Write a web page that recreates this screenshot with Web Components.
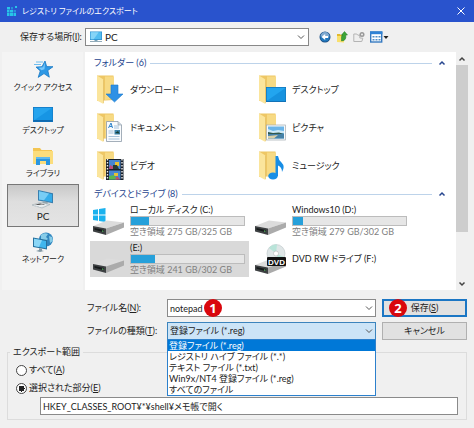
<!DOCTYPE html>
<html lang="ja">
<head>
<meta charset="utf-8">
<title>レジストリ ファイルのエクスポート</title>
<style>
  html, body { margin: 0; min-height: 100%; }
  body { background: #f0f0f0; color: #222; font: 9px/12px "Lato", "Noto Sans CJK JP", sans-serif; font-feature-settings: "palt"; }
</style>
</head>
<body>
<export-dialog></export-dialog>

<script>
const ICONS = {
  regedit: ['0 0 12 12', '<g fill="#27c5e8"><path d="M1 2h3v2.500H1zM1 5h2.500v2.500H1zM4 5h3v2.500H4zM1 8h2.500v3H1zM4 8h3v3H4zM7.500 8H10v3H7.500z"/><path d="M5 2h2v2.500H5zM7.500 5H10v2.500H7.500z" opacity=".55"/><path d="M9 1h2v2H9z"/></g>'],
  close: ['0 0 8 8', '<path d="M.5.5l7 7M7.5.5l-7 7" stroke="#fff" stroke-width="1" fill="none"/>'],
  chevron: ['0 0 8 8', '<path d="M1 2.5l3 3 3-3" stroke="#555" fill="none"/>'],
  up: ['0 0 8 8', '<path d="M1.5 5.5L4 3l2.500 2.500" stroke="currentColor" stroke-width="1.500" fill="none"/>'],
  down: ['0 0 8 8', '<path d="M1.500 2.500L4 5l2.500-2.500" stroke="currentColor" stroke-width="1.500" fill="none"/>'],
  monitor: ['0 0 14 12', '<rect x="1" y=".5" width="12" height="8.500" fill="#2d8fce"/><rect x="1.700" y="1.200" width="10.600" height="7" fill="#54bdf0"/><path d="M1.700 1.200h8l-5 7h-3z" fill="#86d4f7"/><path d="M5.500 9h3v1.200h-3z" fill="#7aa2b8"/><path d="M1 10.500h12" stroke="#93acba"/>'],
  back: ['0 0 12 12', '<circle cx="6" cy="6" r="5.500" fill="#1b4f86"/><circle cx="6" cy="6" r="4.700" fill="#2278bd"/><path d="M1.500 5.500a4.500 4.500 0 0 1 9 0z" fill="#7fa9cf"/><path d="M6.200 3v2h3v2h-3v2L2.500 6z" fill="#fff"/>'],
  upfolder: ['0 0 12 12', '<path d="M1 3h3l1 1h3v7H1z" fill="#e3b92c"/><path d="M1 5h7v6.500L1 11z" fill="#f9e06d"/><path d="M5.500 10V6q0-2 1.500-2H5.500L8.500.5 11.500 4H9.800v3Q9 10 5.500 10z" fill="#3ba536" stroke="#247a27" stroke-width=".5"/>'],
  newfolder: ['0 0 12 12', '<path d="M.8 10.500V3h3l1 1.200h2V7l3 .2-1 3.300z" fill="#eee" stroke="#b4b4b4"/><circle cx="9" cy="3.500" r="2.500" fill="#999"/><circle cx="9" cy="3.500" r="1" fill="#eee"/>'],
  views: ['0 0 20 12', '<rect x=".7" y="1" width="11" height="10" fill="#fff" stroke="#3579c0" stroke-width="1.400"/><path d="M0 .5h12.400v2.700H0z" fill="#2f82d5"/><path d="M2.500 5h2v1.500h-2zM5.500 5h2v1.500h-2zM8.500 5h2v1.500h-2zM2.500 8h2v1.500h-2zM5.500 8h2v1.500h-2zM8.500 8h2v1.500h-2z" fill="#528fc8"/><path d="M13.500 5h5L16 8z" fill="#222"/>'],
  star: ['0 0 22 20', '<path d="M13 1l1.700 5.600 6.300.1-5.200 3.800 1.500 6.700-5.300-3.600-5.800 3.800 2.100-6.500L4 7.100l6-.4z" fill="#2d98e5" stroke="#1879c4" stroke-width=".8"/><path d="M13 2.500l-2 4.800-4.500.5 3 2.500 3-1z" fill="#79c8fa"/><path d="M4 2h7M2 4.500h7" stroke="#6dbdf0" stroke-width="1.200"/>'],
  desktop: ['0 0 22 20', '<rect x="1" y="4" width="20" height="15" fill="#1378c4"/><rect x="1.800" y="4.800" width="18.400" height="12.700" fill="#25a4ee"/><path d="M1.800 17.500l18.400-12.700v12.700z" fill="#1795e4"/><path d="M1.500 17.800h19" stroke="#0d5a9b"/>'],
  library: ['0 0 22 20', '<path d="M1 2h7l1.500 2H20v14H1z" fill="#f3c552"/><path d="M1 5h20v13H1z" fill="#fbdd7c"/><path d="M4 11h14v8h-4v-4H8v4H4z" fill="#2b96df"/><path d="M4 11h14v2H4z" fill="#5db9ef"/>'],
  pc: ['0 0 24 20', '<path d="M7 1l15 3.300v10L7 11.500z" fill="#387faf"/><path d="M8 2.300l13 2.900v7.700L8 10.400z" fill="#35ace9"/><path d="M8 2.300l10 2.200-5 6.800-5-.9z" fill="#78cdf5"/><path d="M12 12l5 1-1 3-5-1z" fill="#94a6af"/><path d="M1 16l8-2.500 10 2-8 3.500z" fill="#dfe5e8" stroke="#9eabb2" stroke-width=".6"/><path d="M3 16l6-1.700 6 1.200M5 17l7-2M8 17.700l7-2" stroke="#fff" stroke-width=".5"/>'],
  network: ['0 0 22 20', '<circle cx="14" cy="7.500" r="7" fill="#3186bf"/><path d="M9 3q3-3 7-1l-2 3 2 2-3 2-4-2zM17 4l3 1 1 4-3 2z" fill="#87cce8"/><path d="M1 5.500L15 8v9.500L1 15z" fill="#28719e"/><path d="M2 6.700l12 2.200v7.400L2 14z" fill="#40b6ee"/><path d="M2 6.700l8 1.500-3 6.700L2 14z" fill="#8bd7f7"/><path d="M7 16.200l3 .6v1.700l2 .5-4 1-4-1 3-1z" fill="#8298a4"/>'],
  drive: ['0 0 31 28', '<path d="M0 19L14 13.500l17 2L13 21.500z" fill="#dcdcdc"/><path d="M0 19l13 2.500V28L0 24.500z" fill="#3e4143"/><path d="M13 21.500l18-6v5L13 28z" fill="#ababab"/><path d="M1.500 21l9.500 2v2.200L1.500 22.800z" fill="#161a1b"/><path d="M9 23.500l1.500.3v1l-1.500-.3z" fill="#6bd977"/>'],
};
const folder = '<path d="M4 .5h16.500V25L4 26z" fill="#eec765"/><path d="M12 1.500h9V24l-9 1z" fill="#f7da84"/><path d="M4 .5l6.500 4V29L4 25.500z" fill="#fbe59c"/><path d="M10.500 4.500V28" stroke="#dfba5d" stroke-width=".6"/>';
const F = (s) => ['0 0 31 30', folder + s];
Object.assign(ICONS, {
  'f-download': F('<path d="M18 10h7v9h5l-8.500 8L13 19h5z" fill="#2f91e5" stroke="#1879cc" stroke-width=".6"/>'),
  'f-desktop': F('<rect x="11" y="12" width="20" height="15" fill="#1272b7"/><rect x="11.700" y="12.700" width="18.600" height="13" fill="#22a5ef"/><path d="M12 25.700l18-12.500v12.500z" fill="#1692df"/>'),
  'f-document': F('<path d="M13.500 8.500H25l3.500 3.500v16.500h-15z" fill="#f9fbfd" stroke="#8d9ba8" stroke-width=".8"/><path d="M25 8.500V12h3.500" fill="#ced9e2" stroke="#8d9ba8" stroke-width=".6"/><path d="M15.500 15l2.500-5 1.500 5M16.500 13.500h2.500" stroke="#2d83cb" fill="none"/><path d="M21 13h5M21 15h5M15.500 18h5M15.500 20h5M15.500 23.500h11M15.500 26h11" stroke="#93b5d2" stroke-width=".8"/><rect x="21.500" y="17" width="5.500" height="4.500" fill="#3d83ab"/><path d="M22 20l3-2 1.500 2.500z" fill="#163c32"/>'),
  'f-pictures': F('<rect x="11.500" y="12" width="19" height="15" fill="#f8fafb" stroke="#a2aab0" stroke-width=".7"/><rect x="13" y="13.500" width="16" height="12" fill="#6bb5e9"/><path d="M13 16l5 2 5-1 6 1v2H13z" fill="#cde9f7"/><path d="M13 19l5 1 6-.5 5 1.500H13z" fill="#31594e"/><path d="M13 21h16v4.500H13z" fill="#4581a7"/><path d="M13 23l10-1-4 3.500h-6z" fill="#d9cfa8"/>'),
  'f-video': F('<rect x="13" y="8" width="17.500" height="21" fill="#18202b"/><rect x="16" y="9" width="11.500" height="9" fill="#4686d0"/><rect x="16" y="19.500" width="11.500" height="9" fill="#4686d0"/><path d="M14.500 8v21M29 8v21" stroke="#eee" stroke-width="1.400" stroke-dasharray="1.500 1.500"/><path d="M22 11h4v4h-4z" fill="#e8c233"/><path d="M17 14l4 2 2 2h-7z" fill="#ba4a79"/><path d="M20 14h4l2 4h-6z" fill="#263c33"/><path d="M21 22h4v3h-4z" fill="#e8c233"/><path d="M16 25l5-1 3 4.500h-8z" fill="#5ab653"/><path d="M24 25l3 3.500h-5z" fill="#c94c62"/>'),
  'f-music': F('<ellipse cx="18" cy="25" rx="4.800" ry="3.500" fill="#188ee5"/><path d="M20.500 5H23q.5 4 3.500 6.500 4 4 .5 9.500 0-5-4-6.500V25h-2.500z" fill="#188ee5"/>'),
  'd-windows': ['0 0 31 28', '<path d="M0 3l5-.8V7.500H0zM6 2l6.500-1v6.500H6zM0 8.500h5v5.200l-5-.8zM6 8.500h6.500V15L6 13.900z" fill="#1bb2ee"/>' + ICONS.drive[1]],
  'd-dvd': ['0 0 31 30', '<g transform="translate(0 2)">' + ICONS.drive[1] + '</g><circle cx="21" cy="9.500" r="9" fill="#dfe6e7" stroke="#b8c2c4" stroke-width=".6"/><path d="M21 9.500L14 4q3-4 8-3.500zM21 9.500l8 3.500q-2 4-5 5z" fill="#b9e4d9"/><circle cx="21" cy="9.500" r="2.500" fill="#fff" stroke="#aaa" stroke-width=".5"/><rect x="12" y="13" width="19" height="9" rx="1" fill="#111"/><text x="21.500" y="20.500" text-anchor="middle" font-family="Liberation Sans" font-weight="700" font-size="8" fill="#fff">DVD</text>'],
});

class UiIcon extends HTMLElement {
  connectedCallback() {
    const [box, art] = ICONS[this.getAttribute('name')];
    const [, , w, h] = box.split(' ');
    this.attachShadow({ mode: 'open' }).innerHTML =
      `<style>:host{display:block;flex:none;line-height:0}svg{display:block}</style>
       <svg width="${w}" height="${h}" viewBox="${box}" aria-hidden="true">${art}</svg>`;
  }
}
customElements.define('ui-icon', UiIcon);

function define(name, html) {
  const tpl = document.createElement('template');
  customElements.define(name, class extends HTMLElement {
    constructor() {
      super();
      const own = html.replace(/\{\{([\w-]+)\}\}/g, (m, a) => this.getAttribute(a) ?? '');
      tpl.innerHTML = '<style>*{box-sizing:border-box}button,input,select{font:inherit;color:inherit;font-feature-settings:inherit;border-radius:0;margin:0}</style>' + own;
      this.attachShadow({ mode: 'open' }).append(tpl.content.cloneNode(true));
    }
  });
}

define('title-bar', `
<style>
:host{display:flex;align-items:center;gap:4px;height:22px;padding:0 9px 0 6px;background:#2953cd;color:#fff;font-size:8px}
h1{flex:1;margin:0;font:inherit}
button{border:0;background:none;padding:0}
</style>
<ui-icon name="regedit"></ui-icon><h1><slot></slot></h1>
<button aria-label="閉じる"><ui-icon name="close"></ui-icon></button>`);

define('look-in', `
<style>
:host{display:flex;align-items:center;padding:6px 84px 6px 20px}
label{width:65px;flex:none}
.box{flex:1;display:flex;align-items:center;height:18px;border:1px solid #888;background:#fff;padding:0 3px}
select{flex:1;appearance:none;border:0;background:none;font-size:10px;height:16px;padding:0 2px}
.tools{display:flex;gap:5px;margin-left:10px}
.tools button{border:0;background:none;padding:0}
</style>
<label for="place">保存する場所(<u>I</u>):</label>
<div class="box"><ui-icon name="monitor"></ui-icon><select id="place"><option>PC</option></select><ui-icon name="chevron"></ui-icon></div>
<div class="tools">
<button aria-label="戻る"><ui-icon name="back"></ui-icon></button>
<button aria-label="上へ"><ui-icon name="upfolder"></ui-icon></button>
<button aria-label="新しいフォルダー"><ui-icon name="newfolder"></ui-icon></button>
<button aria-label="表示"><ui-icon name="views"></ui-icon></button>
</div>`);

define('place-item', `
<style>
:host{display:block}
button{width:100%;height:43px;border:1px solid transparent;background:none;padding:4px 0 0;display:flex;flex-direction:column;align-items:center;gap:1px;white-space:nowrap;font-size:8px}
:host([active]) button{border-color:#777;background:linear-gradient(#c8c8c8,#dedede 40%,#e4e4e4);font-size:10px}
</style>
<button><ui-icon name="{{icon}}"></ui-icon><span><slot></slot></span></button>`);

define('place-bar', `
<style>:host{display:block;padding:3px 4px 0 5px;background:#f4f4f4}</style>
<nav><slot></slot></nav>`);

define('item-group', `
<style>
:host{display:block;padding:0 5px 1px}
h2{display:flex;align-items:center;gap:4px;height:18px;margin:0;padding:0 5px 0 4px;font:inherit;color:#26458f}
h2 i{flex:1;height:1px;background:#bdd3ea}
h2 ui-icon{margin-left:2px}
.grid{display:grid;grid-template-columns:repeat(2,159px);gap:2px 3px}
</style>
<h2>{{heading}}<i></i><ui-icon name="up"></ui-icon></h2>
<div class="grid"><slot></slot></div>`);

define('folder-item', `
<style>:host{display:flex;align-items:center;gap:6px;height:36px;padding-left:3px}</style>
<ui-icon name="{{icon}}"></ui-icon><span><slot></slot></span>`);

define('drive-item', `
<style>
:host{display:flex;align-items:center;gap:6px;height:36px;padding:0 4px 0 3px}
:host([selected]){background:#d9d9d9}
.info{flex:1;white-space:nowrap}
.name,.free{display:block;line-height:12px}
.meter{height:10px;border:1px solid #bcbcbc;background:#e6e6e6}
.meter i{display:block;height:100%;width:{{used}}%;background:#26a0da}
.free{color:#808080}
</style>
<ui-icon name="{{icon}}"></ui-icon>
<div class="info"><span class="name"><slot></slot></span><div class="meter" role="meter" aria-valuenow="{{used}}" aria-label="使用量"><i></i></div><span class="free">{{free}}</span></div>`);

define('file-list', `
<style>
:host{display:flex;background:#fff}
.items{flex:1;padding:2px 0 12px}
.bar{width:12px;background:#f0f0f0;display:flex;flex-direction:column;align-items:center;color:#444}
.bar button{border:0;background:none;padding:0;height:13px;display:flex;align-items:center}
.track{flex:1;width:100%}
.thumb{height:79%;background:#cdcdcd}
</style>
<div class="items"><slot></slot></div>
<div class="bar"><button aria-label="上へスクロール"><ui-icon name="up"></ui-icon></button><div class="track"><div class="thumb"></div></div><button aria-label="下へスクロール"><ui-icon name="down"></ui-icon></button></div>`);

define('step-badge', `
<style>:host{position:absolute;width:18px;height:18px;border-radius:50%;background:#d9070d;color:#fff;font:700 13px/18px "Open Sans",sans-serif;text-align:center}</style><slot></slot>`);

define('save-form', `
<style>
:host{display:grid;grid-template-columns:80px 1fr 85px;gap:5px 0;align-items:center;padding:9px 7px 0 87px}
.field{position:relative;display:flex;align-items:center;height:18px;border:1px solid #8a8a8a;background:#fff;margin-right:6px;padding-right:2px}
input,select{flex:1;min-width:0;border:0;background:none;height:16px;padding:0 2px;appearance:none;outline:0}
.field button{border:0;background:none;padding:0}
.open{border-color:#3c84bd;background:#cce4f7}
ul{position:absolute;z-index:2;left:-1px;right:-1px;top:16px;margin:0;padding:0;list-style:none;border:1px solid #2c80cc;background:#fff;line-height:11px}
li{padding-left:1px}
li[aria-selected=true]{background:#0078d7;color:#fff}
.action{position:relative;display:flex}
.action button{width:100%;height:18px;border:1px solid #b0b0b0;background:#e1e1e1;padding:0}
.action .default{border:2px solid #1b76c4}
.b1{left:36px;top:-1px}
.b2{left:7px;top:0}
</style>
<label for="name">ファイル名(<u>N</u>):</label>
<div class="field"><input id="name" value="notepad"><button aria-label="履歴"><ui-icon name="chevron"></ui-icon></button><step-badge class="b1">1</step-badge></div>
<div class="action"><button class="default">保存(<u>S</u>)</button><step-badge class="b2">2</step-badge></div>
<label for="type">ファイルの種類(<u>T</u>):</label>
<div class="field open"><select id="type"><option>登録ファイル (*.reg)</option></select><ui-icon name="chevron"></ui-icon>
<ul role="listbox" aria-label="ファイルの種類">
<li role="option" aria-selected="true">登録ファイル (*.reg)</li><li role="option">レジストリ ハイブ ファイル (*.*)</li><li role="option">テキスト ファイル (*.txt)</li><li role="option">Win9x/NT4 登録ファイル (*.reg)</li><li role="option">すべてのファイル</li>
</ul></div>
<div class="action"><button>キャンセル</button></div>`);

define('export-range', `
<style>
:host{display:block;padding:6px 7px 9px}
fieldset{border:1px solid #dcdcdc;margin:0;padding:3px 8px 4px;min-width:0}
legend{padding:0 3px;margin-left:-6px;line-height:12px}
label{display:flex;align-items:center;gap:2px;height:18px}
input[type=radio]{appearance:none;width:11px;height:11px;border:1px solid #444;border-radius:50%;background:#fff}
input[type=radio]:checked{background:radial-gradient(#222 0 3px,#fff 3px)}
.path{display:block;width:calc(100% - 24px);margin-left:24px;height:18px;border:1px solid #8a8a8a;background:#fff;padding:0 2px;outline:0}
</style>
<fieldset><legend>エクスポート範囲</legend>
<label><input type="radio" name="range"><span>すべて(<u>A</u>)</span></label>
<label><input type="radio" name="range" checked><span>選択された部分(<u>E</u>)</span></label>
<input class="path" aria-label="選択された部分" value="HKEY_CLASSES_ROOT¥*¥shell¥メモ帳で開く">
</fieldset>`);

// Attribute-driven elements come from markup cloned after every class is registered.
const dialog = document.createElement('template');
dialog.innerHTML = `
<style>
:host{display:block;background:#f0f0f0}
main{display:grid;grid-template-columns:85px 1fr}
place-bar{margin:0 2px}
file-list{margin-right:6px}
</style>
<title-bar>レジストリ ファイルのエクスポート</title-bar>
<look-in></look-in>
<main>
<place-bar>
<place-item icon="star">クイック アクセス</place-item>
<place-item icon="desktop">デスクトップ</place-item>
<place-item icon="library">ライブラリ</place-item>
<place-item icon="pc" active>PC</place-item>
<place-item icon="network">ネットワーク</place-item>
</place-bar>
<file-list>
<item-group heading="フォルダー (6)">
<folder-item icon="f-download">ダウンロード</folder-item><folder-item icon="f-desktop">デスクトップ</folder-item>
<folder-item icon="f-document">ドキュメント</folder-item><folder-item icon="f-pictures">ピクチャ</folder-item>
<folder-item icon="f-video">ビデオ</folder-item><folder-item icon="f-music">ミュージック</folder-item>
</item-group>
<item-group heading="デバイスとドライブ (8)">
<drive-item icon="d-windows" used="16" free="空き領域 275 GB/325 GB">ローカル ディスク (C:)</drive-item>
<drive-item icon="drive" used="9" free="空き領域 279 GB/302 GB">Windows10 (D:)</drive-item>
<drive-item icon="drive" used="21" free="空き領域 241 GB/302 GB" selected>(E:)</drive-item>
<folder-item icon="d-dvd">DVD RW ドライブ (F:)</folder-item>
</item-group>
</file-list>
</main>
<save-form></save-form>
<export-range></export-range>`;
customElements.define('export-dialog', class extends HTMLElement {
  constructor() {
    super();
    this.attachShadow({ mode: 'open' }).append(document.importNode(dialog.content, true));
  }
});
</script>
</body>
</html>
